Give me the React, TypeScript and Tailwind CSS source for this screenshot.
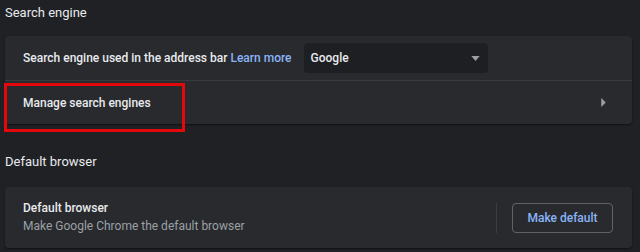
import React from 'react';

const font = { fontFamily: 'Roboto, "Liberation Sans", sans-serif' };

function Caret({ className }: { className?: string }) {
    return (
        <svg viewBox="0 0 10 6" className={className}>
            <path d="M0 0h10L5 6z" fill="currentColor" />
        </svg>
    );
}

function Chevron({ className }: { className?: string }) {
    return (
        <svg viewBox="0 0 5 10" className={className}>
            <path d="M0 0l5 5-5 5z" fill="currentColor" />
        </svg>
    );
}

export default function App() {
    return (
        <div
            className="w-[640px] h-[252px] overflow-hidden bg-[#202124] pl-[5px] pr-[8px] text-[#e8eaed]"
            style={font}
        >
            {/* Search engine */}
            <div className="h-[36px] pt-[4px] text-[13px] leading-[18px]">Search engine</div>

            <div className="relative rounded-[4px] bg-[#292a2d] shadow-[0_1px_2px_rgba(0,0,0,0.5)]">
                <div className="flex h-[44px] items-center pl-[18px] text-[12px] font-medium">
                    <span>Search engine used in the address bar</span>
                    <span className="ml-[3px] text-[#8ab4f8]">Learn more</span>
                    <div className="ml-[12px] flex h-[30px] w-[184px] items-center justify-between rounded-[4px] bg-[#1e1f22] pl-[7px] pr-[8px]">
                        <span className="text-[12px]">Google</span>
                        <Caret className="h-[5px] w-[9px] text-[#9aa0a6]" />
                    </div>
                </div>
                <div className="h-px bg-[#3a3b3f]" />
                <div className="flex h-[43px] items-center justify-between pl-[18px] pr-[26px] text-[12px] font-medium">
                    <span>Manage search engines</span>
                    <Chevron className="h-[9px] w-[5px] text-[#9aa0a6]" />
                </div>

                {/* highlight box */}
                <div className="absolute left-[-1px] top-[47px] h-[49px] w-[181px] border-[3px] border-[#e3080c]" />
            </div>

            {/* Default browser */}
            <div className="flex h-[63px] items-end pb-[16px] text-[13px] leading-[18px]">Default browser</div>

            <div className="flex h-[61px] items-center rounded-[4px] bg-[#292a2d] pl-[18px] pr-[19px] shadow-[0_1px_2px_rgba(0,0,0,0.5)]">
                <div className="flex-1">
                    <div className="text-[12px] font-medium leading-[18px]">Default browser</div>
                    <div className="text-[12px] leading-[19px] text-[#9aa0a6]">Make Google Chrome the default browser</div>
                </div>
                <div className="h-[30px] w-px bg-[#3c3d41]" />
                <button className="ml-[15px] h-[30px] w-[101px] rounded-[4px] border border-[#5f6368] text-[12px] font-medium text-[#8ab4f8]">
                    Make default
                </button>
            </div>
        </div>
    );
}
